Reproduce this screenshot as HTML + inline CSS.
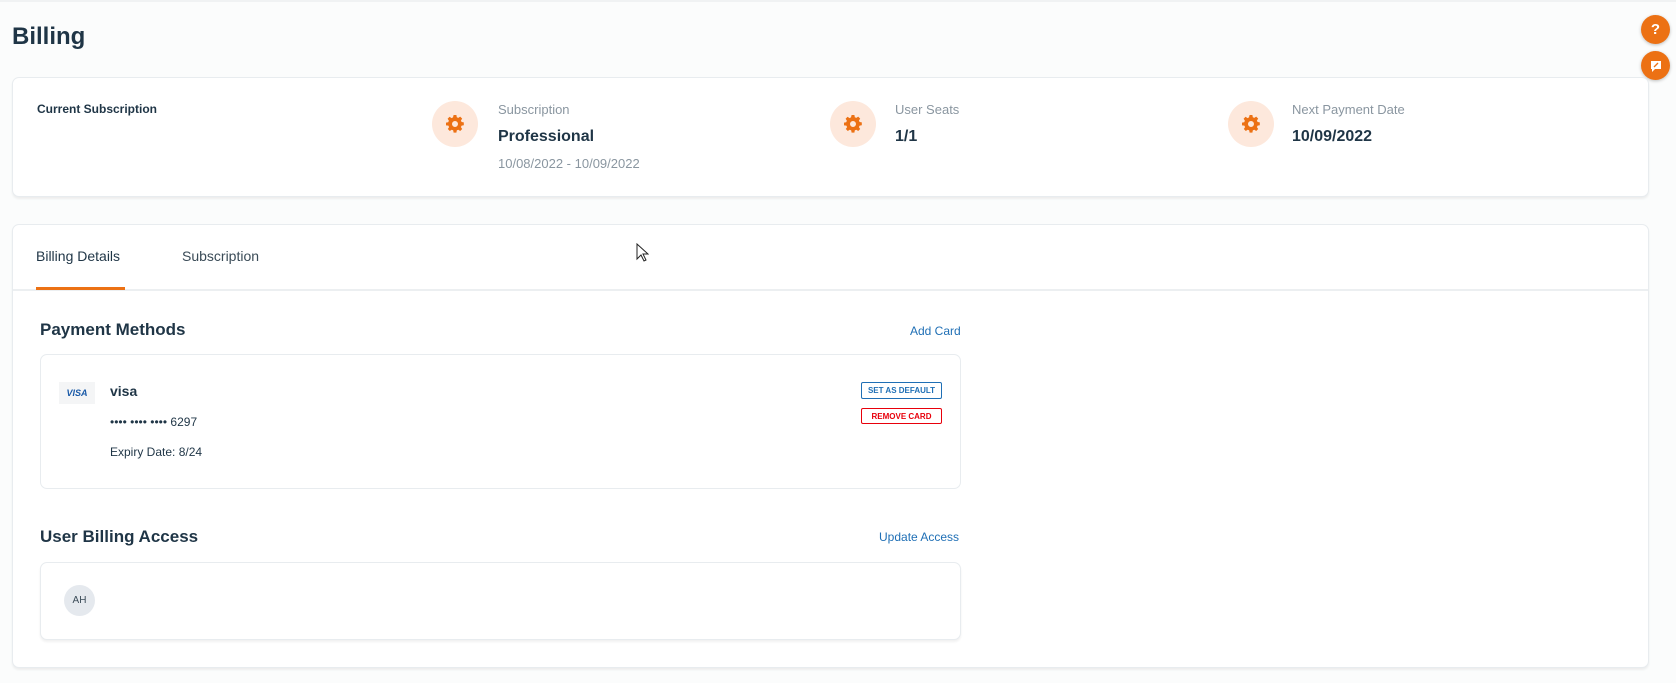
<!DOCTYPE html>
<html><head><meta charset="utf-8"><style>
*{margin:0;padding:0;box-sizing:border-box}
body{width:1676px;height:683px;background:#fbfcfc;font-family:"Liberation Sans",Arial,sans-serif;color:#1f3546;position:relative;overflow:hidden}
.a{position:absolute;white-space:nowrap}
.card{position:absolute;background:#fff;border:1px solid #e8ecef;border-radius:7px;box-shadow:0 2px 2px rgba(0,0,0,.06)}
.ic{position:absolute;width:46px;height:46px;border-radius:50%;background:#fde8dc;display:flex;align-items:center;justify-content:center}
.lbl{font-size:13px;color:#8a96a0}
.val{font-size:16px;font-weight:bold;color:#1f3546}
.fab{position:absolute;width:29px;height:29px;border-radius:50%;background:#ec7114;box-shadow:0 1px 3px rgba(0,0,0,.25);color:#fff;font-weight:bold;font-size:15px;display:flex;align-items:center;justify-content:center}
.btn{position:absolute;font-size:8px;font-weight:bold;border:1px solid;border-radius:2px;text-align:center;line-height:15px}
</style></head><body>
<div style="position:absolute;left:0;top:0;width:1676px;height:2px;background:#f0f2f3"></div>
<div class="a" style="left:12px;top:23px;font-size:24px;font-weight:bold;color:#1f3546">Billing</div>
<div class="fab" style="left:1641px;top:15px">?</div>
<div class="fab" style="left:1641px;top:51px"><svg width="14" height="14" viewBox="0 0 14 14"><path d="M2 2h10v8H6l-3 3v-3H2z" fill="#fff"/><path d="M5 8l4-4" stroke="#ec7114" stroke-width="1.3"/></svg></div>

<div class="card" style="left:12px;top:77px;width:1637px;height:120px"></div>
<div class="a" style="left:37px;top:102px;font-size:12px;font-weight:bold">Current Subscription</div>
<svg width="0" height="0" style="position:absolute"><defs><g id="g"><path fill="#ec7114" d="M8.6 1h2.8l.4 2.2 1.5.7 1.9-1.3 2 2-1.3 1.9.7 1.5 2.2.4v2.8l-2.2.4-.7 1.5 1.3 1.9-2 2-1.9-1.3-1.5.7-.4 2.2H8.6l-.4-2.2-1.5-.7-1.9 1.3-2-2 1.3-1.9-.7-1.5L1 11.4V8.6l2.2-.4.7-1.5-1.3-1.9 2-2 1.9 1.3 1.5-.7zM10 7a3 3 0 100 6 3 3 0 000-6z"/></g></defs></svg>
<div class="ic" style="left:432px;top:101px"><svg width="20" height="20" viewBox="0 0 20 20"><use href="#g"/></svg></div>
<div class="ic" style="left:830px;top:101px"><svg width="20" height="20" viewBox="0 0 20 20"><use href="#g"/></svg></div>
<div class="ic" style="left:1228px;top:101px"><svg width="20" height="20" viewBox="0 0 20 20"><use href="#g"/></svg></div>
<div class="a lbl" style="left:498px;top:102px">Subscription</div>
<div class="a val" style="left:498px;top:128px">Professional</div>
<div class="a lbl" style="left:498px;top:156px">10/08/2022 - 10/09/2022</div>
<div class="a lbl" style="left:895px;top:102px">User Seats</div>
<div class="a val" style="left:895px;top:128px">1/1</div>
<div class="a lbl" style="left:1292px;top:102px">Next Payment Date</div>
<div class="a val" style="left:1292px;top:128px">10/09/2022</div>

<div class="card" style="left:12px;top:224px;width:1637px;height:444px"></div>
<div style="position:absolute;left:13px;top:289px;width:1635px;height:2px;background:#eceff1"></div>
<div style="position:absolute;left:36px;top:287px;width:89px;height:3px;background:#ec7114"></div>
<div class="a" style="left:36px;top:248px;font-size:14px;color:#1f3546">Billing Details</div>
<div class="a" style="left:182px;top:248px;font-size:14px;color:#3a4b57">Subscription</div>
<svg class="a" style="left:636px;top:243px" width="13" height="20" viewBox="0 0 13 20"><path d="M1 1v15l4-4 3 6 2-1-3-6h5z" fill="#fff" stroke="#222" stroke-width="1"/></svg>

<div class="a" style="left:40px;top:320px;font-size:17px;font-weight:bold">Payment Methods</div>
<div class="a" style="left:910px;top:324px;font-size:12px;color:#1f6fb5">Add Card</div>
<div class="card" style="left:40px;top:354px;width:921px;height:135px;box-shadow:none"></div>
<div class="a" style="left:59px;top:382px;width:36px;height:22px;background:#f4f5f6;color:#1a5aa8;font-size:9px;font-weight:bold;font-style:italic;text-align:center;line-height:22px">VISA</div>
<div class="a" style="left:110px;top:383px;font-size:14px;font-weight:bold">visa</div>
<div class="a" style="left:110px;top:415px;font-size:12px;color:#1f3546">•••• •••• •••• 6297</div>
<div class="a" style="left:110px;top:445px;font-size:12px;color:#1f3546">Expiry Date: 8/24</div>
<div class="btn" style="left:861px;top:382px;width:81px;height:17px;color:#1f6fb5;border-color:#1f6fb5">SET AS DEFAULT</div>
<div class="btn" style="left:861px;top:408px;width:81px;height:16px;color:#e8000b;border-color:#e8000b">REMOVE CARD</div>

<div class="a" style="left:40px;top:527px;font-size:17px;font-weight:bold">User Billing Access</div>
<div class="a" style="left:879px;top:530px;font-size:12px;color:#1f6fb5">Update Access</div>
<div class="card" style="left:40px;top:562px;width:921px;height:78px"></div>
<div class="a" style="left:64px;top:585px;width:31px;height:31px;border-radius:50%;background:#e5e9ee;font-size:10px;color:#3a4b57;text-align:center;line-height:31px">AH</div>
</body></html>
